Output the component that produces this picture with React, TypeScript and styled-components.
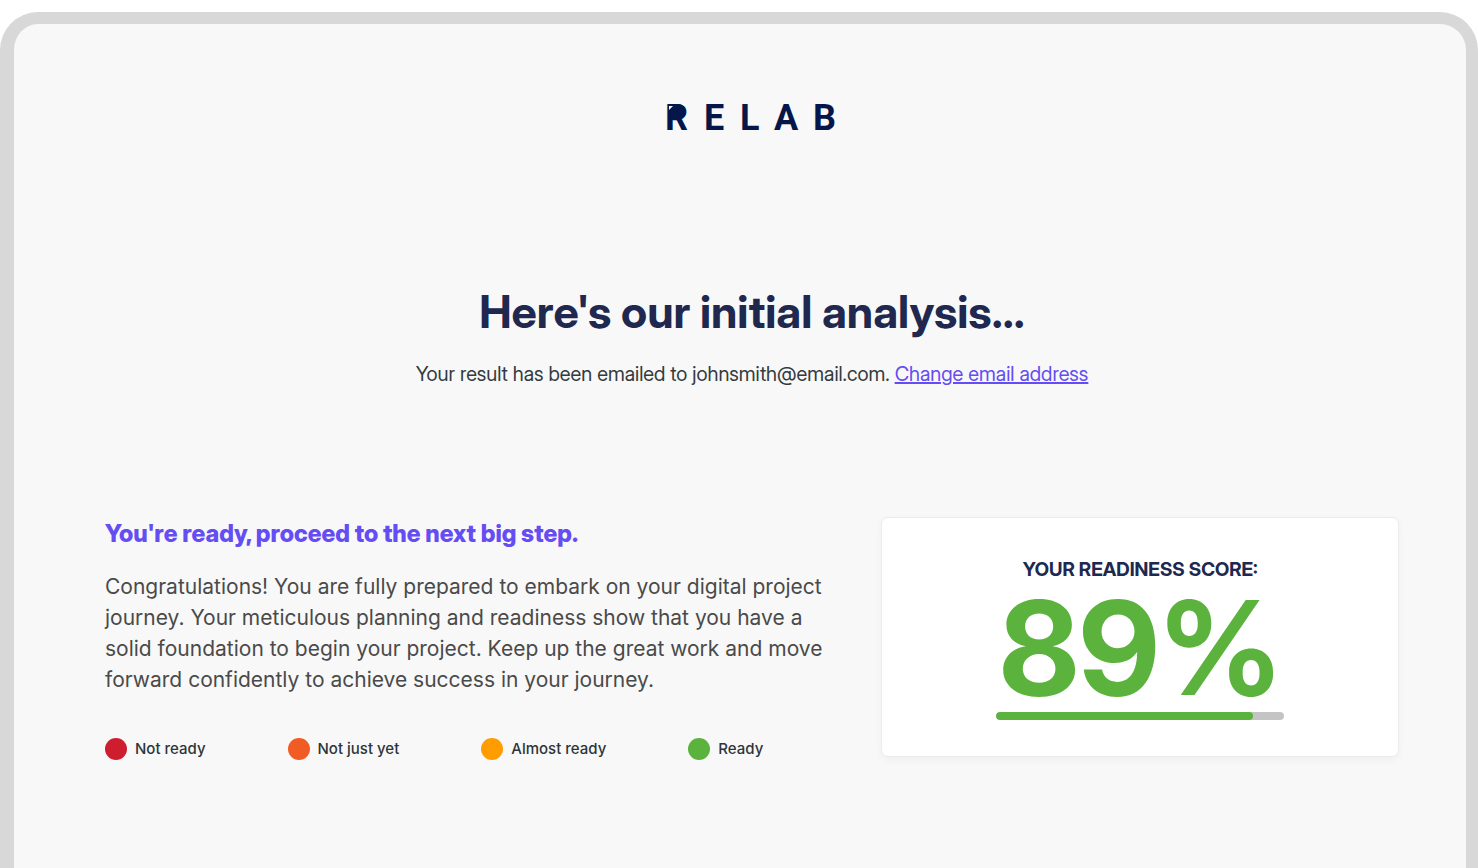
import React from "react";
import styled, { createGlobalStyle } from "styled-components";

const display = `"Inter Display", Inter, "Liberation Sans", sans-serif`;

const GlobalStyle = createGlobalStyle`
  *, *::before, *::after { box-sizing: border-box; }
  body {
    margin: 0;
    background: #ffffff;
    font-family: Inter, "Liberation Sans", sans-serif;
  }
  h1, h2, p, ul { margin: 0; padding: 0; }
`;

const Page = styled.div`
  display: flex;
  flex-direction: column;
  min-height: 100vh;
  padding-top: 12px;
`;

const Frame = styled.main`
  flex: 1;
  display: flex;
  flex-direction: column;
  padding: 72px 67px 80px 91px;
  background: #f8f8f8;
  border: solid #d8d8d8;
  border-width: 12px 12px 0 14px;
  border-radius: 38px 38px 0 0;
`;

const Brand = styled.header`
  display: flex;
  justify-content: center;
`;

const Logo = styled.svg`
  display: block;
  font-family: Roboto, "Liberation Sans", sans-serif;
  font-size: 36px;
  font-weight: 700;
  fill: #04164a;
`;

const Intro = styled.section`
  display: flex;
  flex-direction: column;
  align-items: center;
  gap: 21px;
  margin-top: 144px;
  text-align: center;
`;

const Title = styled.h1`
  font-family: ${display};
  font-size: 45px;
  line-height: 56px;
  font-weight: 700;
  color: #20284f;
`;

const Note = styled.p`
  font-family: ${display};
  font-size: 20px;
  line-height: 26px;
  color: #343b3f;
`;

const TextLink = styled.a`
  color: #644df2;
  text-decoration: underline;
`;

const Result = styled.section`
  display: grid;
  grid-template-columns: minmax(0, 1fr) minmax(0, 40%);
  gap: 40px;
  align-items: start;
  margin-top: 130px;
`;

const Summary = styled.div`
  display: flex;
  flex-direction: column;
`;

const Verdict = styled.h2`
  font-family: ${display};
  font-size: 24px;
  line-height: 34px;
  font-weight: 800;
  color: #644df2;
`;

const Body = styled.p`
  margin-top: 20px;
  font-size: 21px;
  line-height: 31px;
  color: #4a4a4a;
`;

const Legend = styled.ul`
  display: flex;
  flex-wrap: wrap;
  gap: 12px 82px;
  margin-top: 43px;
  list-style: none;
`;

const LegendItem = styled.li`
  display: flex;
  align-items: center;
  gap: 8px;
  font-size: 15px;
  line-height: 22px;
  font-weight: 500;
  color: #2d3539;
`;

const Dot = styled.span<{ $color: string }>`
  width: 22px;
  height: 22px;
  border-radius: 50%;
  background: ${(p) => p.$color};
`;

const ScoreCard = styled.div`
  display: flex;
  flex-direction: column;
  align-items: center;
  padding: 39px 24px 36px;
  background: #ffffff;
  border: 1px solid #ececec;
  border-radius: 7px;
  box-shadow: 0 3px 8px rgba(0, 0, 0, 0.04);
`;

const ScoreLabel = styled.h2`
  font-family: ${display};
  font-size: 19px;
  line-height: 26px;
  font-weight: 700;
  color: #20284f;
`;

const ScoreValue = styled.p`
  font-family: ${display};
  font-size: 130px;
  line-height: 129px;
  font-weight: 700;
  color: #5bb33d;
`;

const Track = styled.div`
  width: 288px;
  max-width: 100%;
  height: 8px;
  border-radius: 4px;
  background: #c4c4c4;
  overflow: hidden;
`;

const Fill = styled.div`
  height: 100%;
  border-radius: 4px;
  background: #5bb33d;
`;

const score = 89;

const levels = [
  { label: "Not ready", color: "#ce1d2f" },
  { label: "Not just yet", color: "#f15c24" },
  { label: "Almost ready", color: "#ff9c00" },
  { label: "Ready", color: "#5bb33d" },
];

export default function App() {
  return (
    <Page>
      <GlobalStyle />
      <Frame>
        <Brand>
          <Logo width="176" height="44" viewBox="0 0 176 44" role="img" aria-label="Relab">
            <text y="34" x="1 40 76 110 149">RELAB</text>
            <path d="M4 8H14A7 7 0 0 1 14 23H4Z" />
            <path d="M5 10H9L5 14Z" fill="#f8f8f8" />
          </Logo>
        </Brand>
        <Intro>
          <Title>Here's our initial analysis...</Title>
          <Note>
            Your result has been emailed to johnsmith@email.com.{" "}
            <TextLink href="#email">Change email address</TextLink>
          </Note>
        </Intro>
        <Result>
          <Summary>
            <Verdict>You're ready, proceed to the next big step.</Verdict>
            <Body>
              Congratulations! You are fully prepared to embark on your digital project journey.
              Your meticulous planning and readiness show that you have a solid foundation to begin
              your project. Keep up the great work and move forward confidently to achieve success
              in your journey.
            </Body>
            <Legend>
              {levels.map((level) => (
                <LegendItem key={level.label}>
                  <Dot $color={level.color} />
                  {level.label}
                </LegendItem>
              ))}
            </Legend>
          </Summary>
          <ScoreCard>
            <ScoreLabel>YOUR READINESS SCORE:</ScoreLabel>
            <ScoreValue>{score}%</ScoreValue>
            <Track
              role="progressbar"
              aria-label="Readiness score"
              aria-valuemin={0}
              aria-valuemax={100}
              aria-valuenow={score}
            >
              <Fill style={{ width: `${score}%` }} />
            </Track>
          </ScoreCard>
        </Result>
      </Frame>
    </Page>
  );
}
